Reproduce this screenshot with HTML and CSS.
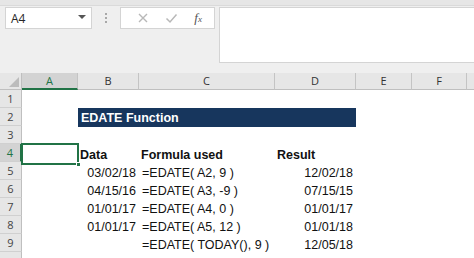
FILE: index.html
```html
<!DOCTYPE html>
<html lang="en">
<head>
    <meta charset="UTF-8">
    <title>EDATE Function</title>
    <link rel="stylesheet" href="styles.css">
</head>
<body>
    <div class="top-strip"></div>

    <div class="formula-row">
        <div class="name-box">
            <span>A4</span>
            <i class="caret"></i>
        </div>
        <div class="grip"><b></b><b></b><b></b></div>
        <div class="fx-tools">
            <svg width="12" height="12" viewBox="0 0 12 12"><path d="M2 2 L10 10 M10 2 L2 10" stroke="#b8b8b8" stroke-width="1.4" fill="none"/></svg>
            <svg width="13" height="12" viewBox="0 0 13 12"><path d="M1.5 6.5 L5 10 L11.5 2.5" stroke="#b8b8b8" stroke-width="1.5" fill="none"/></svg>
            <span class="fx">f<sub>x</sub></span>
        </div>
        <div class="fx-input"></div>
    </div>

    <div class="sheet">
        <div class="corner"><i></i></div>
        <div class="col-head active">A</div>
        <div class="col-head">B</div>
        <div class="col-head">C</div>
        <div class="col-head">D</div>
        <div class="col-head">E</div>
        <div class="col-head">F</div>
        <div class="col-head last"></div>

        <div class="row-head">1</div>
        <div class="cells"></div>

        <div class="row-head">2</div>
        <div class="cells">
            <div class="cell"></div>
            <div class="banner">EDATE Function</div>
        </div>

        <div class="row-head">3</div>
        <div class="cells"></div>

        <div class="row-head active">4</div>
        <div class="cells">
            <div class="cell selected"><i class="handle"></i></div>
            <div class="cell bold">Data</div>
            <div class="cell bold">Formula used</div>
            <div class="cell bold">Result</div>
        </div>

        <div class="row-head">5</div>
        <div class="cells">
            <div class="cell"></div>
            <div class="cell num">03/02/18</div>
            <div class="cell">=EDATE( A2, 9 )</div>
            <div class="cell num">12/02/18</div>
        </div>

        <div class="row-head">6</div>
        <div class="cells">
            <div class="cell"></div>
            <div class="cell num">04/15/16</div>
            <div class="cell">=EDATE( A3, -9 )</div>
            <div class="cell num">07/15/15</div>
        </div>

        <div class="row-head">7</div>
        <div class="cells">
            <div class="cell"></div>
            <div class="cell num">01/01/17</div>
            <div class="cell">=EDATE( A4, 0 )</div>
            <div class="cell num">01/01/17</div>
        </div>

        <div class="row-head">8</div>
        <div class="cells">
            <div class="cell"></div>
            <div class="cell num">01/01/17</div>
            <div class="cell">=EDATE( A5, 12 )</div>
            <div class="cell num">01/01/18</div>
        </div>

        <div class="row-head">9</div>
        <div class="cells">
            <div class="cell"></div>
            <div class="cell num"></div>
            <div class="cell">=EDATE( TODAY(), 9 )</div>
            <div class="cell num">12/05/18</div>
        </div>

        <div class="row-head"></div>
        <div class="cells"></div>
    </div>
</body>
</html>
```

FILE: styles.css
```css
* {
    margin: 0;
    padding: 0;
    box-sizing: border-box;
}

body {
    width: 474px;
    height: 258px;
    overflow: hidden;
    background: #efefef;
    font-family: "Liberation Sans", Arial, sans-serif;
    color: #222;
}

.top-strip {
    height: 6px;
    background: #e6e6e6;
    border-bottom: 1px solid #dadada;
}

/* formula bar */
.formula-row {
    display: flex;
    align-items: flex-start;
    height: 57px;
    padding: 1px 0 0 5px;
}

.name-box {
    width: 87px;
    height: 22px;
    background: #fff;
    border: 1px solid #d4d4d4;
    display: flex;
    align-items: center;
    justify-content: space-between;
    padding: 0 5px 0 5px;
    font-family: "Open Sans", sans-serif;
    font-size: 12px;
    color: #262626;
}

.caret {
    width: 0;
    height: 0;
    border-left: 4px solid transparent;
    border-right: 4px solid transparent;
    border-top: 4px solid #555;
    margin-bottom: 2px;
}

.grip {
    width: 28px;
    height: 22px;
    display: flex;
    flex-direction: column;
    align-items: center;
    justify-content: center;
    gap: 2px;
}

.grip b {
    width: 2px;
    height: 2px;
    background: #a8a8a8;
}

.fx-tools {
    width: 95px;
    height: 22px;
    background: #fff;
    border: 1px solid #d4d4d4;
    display: flex;
    align-items: center;
    justify-content: space-around;
    padding: 0 4px 0 8px;
}

.fx {
    font-family: "Liberation Serif", serif;
    font-style: italic;
    font-size: 13px;
    color: #555;
}

.fx sub {
    font-size: 9px;
    vertical-align: 0;
}

.fx-input {
    flex: 1;
    height: 56px;
    margin-left: 4px;
    background: #fff;
    border: 1px solid #d4d4d4;
    border-right: none;
}

/* sheet */
.sheet {
    margin-top: 10px;
    display: grid;
    grid-template-columns: 22px 56px 61px 136px 81px 56px 55px 1fr;
    grid-template-rows: 17px;
    grid-auto-rows: 18px;
    background: #fff;
}

.corner {
    background: #e6e6e6;
    border-right: 1px solid #bfbfbf;
    border-bottom: 1px solid #bfbfbf;
    position: relative;
}

.corner i {
    position: absolute;
    right: 2px;
    bottom: 2px;
    width: 0;
    height: 0;
    border-left: 10px solid transparent;
    border-bottom: 10px solid #bcbcbc;
}

.col-head {
    background: #e6e6e6;
    border-right: 1px solid #c4c4c4;
    border-bottom: 1px solid #bfbfbf;
    text-align: center;
    font-family: "Open Sans", sans-serif;
    font-size: 11px;
    line-height: 16px;
    color: #333;
}

.col-head.active {
    background: #d3d3d3;
    color: #217346;
    border-bottom: 2px solid #217346;
}

.col-head.last {
    border-right: none;
}

.row-head {
    grid-column: 1;
    background: #e6e6e6;
    border-right: 1px solid #bfbfbf;
    border-bottom: 1px solid #d0d0d0;
    text-align: center;
    font-family: "Open Sans", sans-serif;
    font-size: 11px;
    line-height: 17px;
    color: #444;
}

.row-head.active {
    background: #d3d3d3;
    color: #217346;
    border-right: 2px solid #217346;
}

.cells {
    grid-column: 2 / -1;
    display: grid;
    grid-template-columns: 56px 61px 136px 81px;
    font-size: 12.5px;
    line-height: 18px;
    color: #111;
}

.cell {
    padding: 2px 3px 0 3px;
    white-space: nowrap;
    position: relative;
}

.cell.bold {
    font-weight: bold;
    padding-left: 2px;
}

.cell.num {
    text-align: right;
}

.cell.selected {
    outline: 2px solid #217346;
    outline-offset: -1px;
}

.handle {
    position: absolute;
    right: -3px;
    bottom: -3px;
    width: 5px;
    height: 5px;
    background: #217346;
    border: 1px solid #fff;
}

.banner {
    grid-column: 2 / 5;
    background: #17365d;
    color: #fff;
    font-weight: bold;
    font-size: 12.5px;
    padding: 2px 0 0 3px;
    line-height: 17px;
}
```
